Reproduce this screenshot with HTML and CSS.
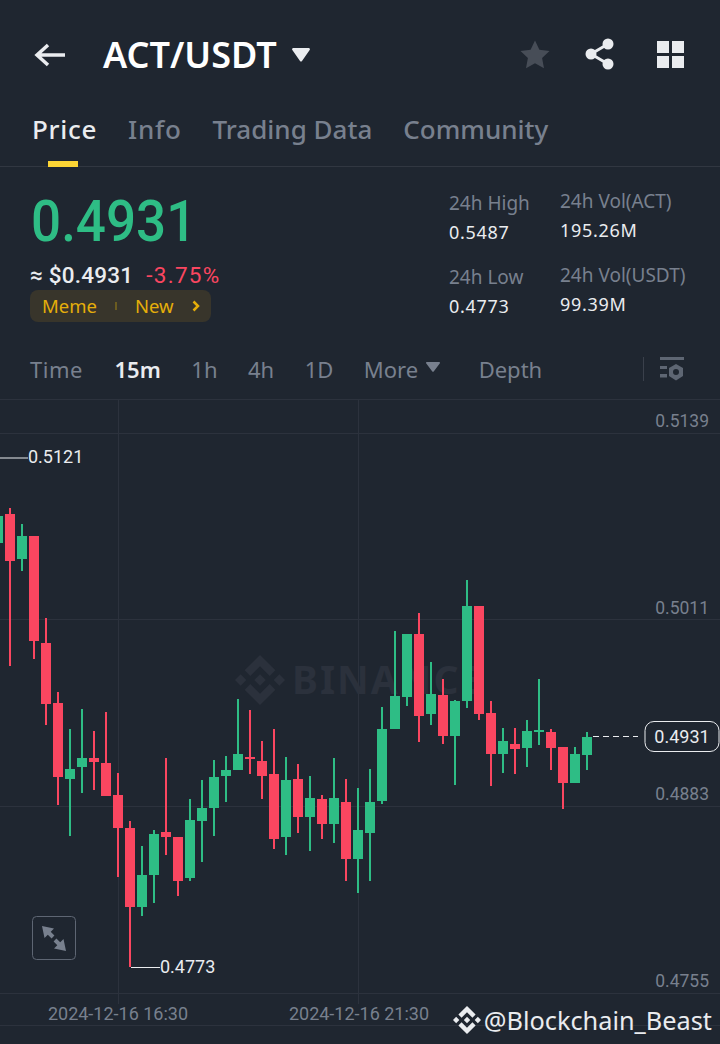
FILE: index.html
```html
<!DOCTYPE html>
<html>
<head>
    <title>ACT/USDT</title>
    <link rel="stylesheet" href="styles.css">
</head>
<body>
    <svg class="defs" width="0" height="0">
        <symbol id="logo" viewBox="0 0 126.61 126.61">
            <path d="M38.73 53.2l24.59-24.58 24.6 24.6 14.3-14.31L63.32 0 24.42 38.9zM0 63.31l14.3-14.31 14.31 14.31-14.31 14.3zM38.73 73.41l24.59 24.59 24.6-24.6 14.31 14.29-38.9 38.91-38.91-38.88v-.03zM98 63.31L112.3 49l14.31 14.3-14.31 14.32zM77.83 63.3L63.32 48.78 52.59 59.51l-1.24 1.23-2.54 2.54 14.51 14.5 14.51-14.47z"/>
        </symbol>
    </svg>

    <header class="topbar">
        <svg class="back-icon" width="32" height="24" viewBox="0 0 32 24">
            <path d="M31 12H3M14 2L3 12l11 10"/>
        </svg>
        <h1 class="pair">ACT/USDT</h1>
        <svg class="pair-caret" width="18" height="14" viewBox="0 0 18 14">
            <path d="M1.5 0h15c1.3 0 1.9 1.4 1 2.3l-7.5 10.7c-.6.7-1.4.7-2 0L.5 2.3C-.4 1.4.2 0 1.5 0z"/>
        </svg>
        <div class="topbar-actions">
            <svg class="star-icon" width="32" height="32" viewBox="0 0 32 32">
                <path d="M16 1.5l4.4 9.3 10.1 1.3-7.4 7 1.9 10.1-9-4.9-9 4.9 1.9-10.1-7.4-7 10.1-1.3z"/>
            </svg>
            <svg class="share-icon" width="30" height="32" viewBox="0 0 30 32">
                <path class="share-line" d="M7 16L24 6M7 16l17 10"/>
                <circle cx="7" cy="16" r="5.5"/>
                <circle cx="24" cy="6" r="5.5"/>
                <circle cx="24" cy="26" r="5.5"/>
            </svg>
            <svg class="grid-icon" width="27" height="27" viewBox="0 0 27 27">
                <rect width="12" height="12"/>
                <rect x="15" width="12" height="12"/>
                <rect y="15" width="12" height="12"/>
                <rect x="15" y="15" width="12" height="12"/>
            </svg>
        </div>
    </header>

    <nav class="tabs">
        <a class="tab tab-short tab-active">Price</a>
        <a class="tab tab-short">Info</a>
        <a class="tab">Trading Data</a>
        <a class="tab">Community</a>
    </nav>

    <section class="summary">
        <div class="price-block">
            <div class="last-price">0.4931</div>
            <div class="price-line">
                <span class="fiat">≈ $0.4931</span>
                <span class="change">-3.75%</span>
            </div>
            <div class="tags">
                <span>Meme</span>
                <i class="tag-sep"></i>
                <span>New</span>
                <svg class="tag-arrow" width="8" height="12" viewBox="0 0 8 12">
                    <path d="M1.5 1.5L6 6l-4.5 4.5"/>
                </svg>
            </div>
        </div>
        <div class="stats">
            <div class="stat-col">
                <div class="stat-label">24h High</div>
                <div class="stat-value">0.5487</div>
                <div class="stat-label stat-gap">24h Low</div>
                <div class="stat-value">0.4773</div>
            </div>
            <div class="stat-col stat-col-vol">
                <div class="stat-label">24h Vol(ACT)</div>
                <div class="stat-value">195.26M</div>
                <div class="stat-label stat-gap">24h Vol(USDT)</div>
                <div class="stat-value">99.39M</div>
            </div>
        </div>
    </section>

    <div class="intervals">
        <span class="interval-time">Time</span>
        <span class="interval-active">15m</span>
        <span>1h</span>
        <span>4h</span>
        <span>1D</span>
        <span class="interval-more">More
            <svg width="14" height="10" viewBox="0 0 14 10"><path d="M1 0h12c.9 0 1.3 1 .7 1.6L7.7 9.5c-.4.4-1 .4-1.4 0L.3 1.6C-.3 1 .1 0 1 0z"/></svg>
        </span>
        <span class="interval-depth">Depth</span>
        <i class="interval-sep"></i>
        <svg class="settings-icon" width="24" height="24" viewBox="0 0 24 24">
            <rect width="24" height="3"/>
            <rect y="9" width="7" height="3"/>
            <rect y="17" width="7" height="3.5"/>
            <path fill-rule="evenodd" d="M16 7l7 4v8l-7 4.5-7-4.5v-8zM16 12a3 3 0 1 0 0 6 3 3 0 0 0 0-6z"/>
        </svg>
    </div>

    <main class="chart">
        <svg id="chart" class="chart-svg" width="720" height="645" viewBox="0 399 720 645">
            <g class="grid-lines">
                <path d="M0 399.5H720M0 433.5H720M0 619.5H720M0 806.5H720M0 993.5H720M0 1025.5H720"/>
                <path d="M118.5 400V1004M358.5 400V1004"/>
            </g>
            <use href="#logo" class="watermark" x="235" y="655" width="50" height="50"/>
            <text class="watermark-text" x="292" y="694">BINANCE</text>
            <g id="candles"></g>
            <g class="axis-labels">
                <text x="709" y="427">0.5139</text>
                <text x="709" y="614">0.5011</text>
                <text x="709" y="800">0.4883</text>
                <text x="709" y="987">0.4755</text>
            </g>
            <text class="date-label" x="118" y="1020">2024-12-16 16:30</text>
            <text class="date-label" x="359" y="1020">2024-12-16 21:30</text>
            <path class="marker-line" d="M0 458H28M131 967.5H160"/>
            <text class="marker-label" x="28" y="463">0.5121</text>
            <text class="marker-label" x="160" y="973">0.4773</text>
            <path class="last-line" d="M593 736.5H638"/>
            <rect class="last-box" x="645" y="721.5" width="74" height="30" rx="9"/>
            <text class="last-label" x="682" y="743">0.4931</text>
            <rect class="expand-box" x="32.5" y="916.5" width="43" height="43" rx="4"/>
            <path class="expand-head" d="M42 926l12 2.5-9.5 9.5zM66 951l-12-2.5 9.5-9.5z"/>
            <path class="expand-shaft" d="M47 931l6 6M61 946l-6-6"/>
        </svg>
        <div class="credit">
            <svg width="28" height="28"><use href="#logo"/></svg>
            <span>@Blockchain_Beast</span>
        </div>
    </main>

    <script src="chart.js"></script>
</body>
</html>
```
FILE: styles.css
```css
* {
    box-sizing: border-box;
}

body {
    margin: 0;
    width: 720px;
    height: 1044px;
    overflow: hidden;
    background-color: #1f2630;
    color: #eaecef;
    font-family: "Noto Sans", sans-serif;
}

.defs {
    display: block;
    height: 0;
}

/* top bar */
.topbar {
    display: flex;
    align-items: center;
    height: 108px;
    padding: 2px 36px 0 34px;
}

.back-icon path {
    fill: none;
    stroke: #eaecef;
    stroke-width: 3.5;
}

.pair {
    margin: 0 15px 0 37px;
    font-size: 36px;
    font-weight: 600;
    line-height: 44px;
    color: #fff;
}

.pair-caret {
    fill: #eaecef;
}

.topbar-actions {
    display: flex;
    align-items: center;
    gap: 33px;
    margin-left: auto;
}

.star-icon {
    fill: #474d57;
}

.share-icon {
    margin-top: -2px;
    fill: #eaecef;
}

.share-line {
    fill: none;
    stroke: #eaecef;
    stroke-width: 3;
}

.grid-icon {
    margin-top: -1px;
    margin-left: 10px;
    fill: #eaecef;
}

/* tabs */
.tabs {
    display: flex;
    gap: 31px;
    height: 59px;
    padding-left: 32px;
    border-bottom: 1px solid #313741;
}

.tab {
    position: relative;
    font-size: 26px;
    line-height: 42px;
    font-weight: 500;
    color: #78808e;
}

.tab-short {
    letter-spacing: 0.7px;
}

.tab-active {
    color: #eaecef;
}

.tab-active::after {
    content: "";
    position: absolute;
    left: 16px;
    bottom: -1px;
    width: 30px;
    height: 6px;
    background-color: #fcd535;
}

/* price and 24h stats */
.summary {
    display: flex;
    justify-content: space-between;
    height: 167px;
    padding: 26px 0 0 30px;
}

.last-price {
    margin-left: 1px;
    font-family: Roboto, sans-serif;
    font-size: 57px;
    font-weight: 500;
    line-height: 58px;
    color: #2ebd85;
    transform: scaleX(0.93);
    transform-origin: left;
}

.price-line {
    display: flex;
    gap: 13px;
    margin-top: 11px;
    font-family: Roboto, sans-serif;
    font-size: 22.5px;
    line-height: 26px;
}

.fiat {
    font-weight: 500;
    letter-spacing: 0.2px;
}

.change {
    letter-spacing: 1.3px;
    color: #fa4660;
}

.tags {
    display: flex;
    align-items: center;
    width: 181px;
    height: 32px;
    margin-top: 2px;
    padding: 0 0 1px 12px;
    border-radius: 8px;
    background-color: #38352b;
    font-size: 18.5px;
    color: #e5ae0a;
}

.tag-sep {
    width: 2px;
    height: 8px;
    margin: 0 18px;
    background-color: #6b5c20;
}

.tag-arrow {
    margin-left: 18px;
    fill: none;
    stroke: #e5ae0a;
    stroke-width: 2.5;
}

.stats {
    display: flex;
    gap: 32px;
    width: 271px;
    margin-top: -3px;
}

.stat-col {
    width: 79px;
    white-space: nowrap;
}

.stat-col-vol {
    margin-top: -2px;
}

.stat-label {
    font-size: 19px;
    line-height: 26px;
    color: #78808e;
}

.stat-gap {
    margin-top: 19px;
}

.stat-value {
    font-size: 18px;
    letter-spacing: 0.7px;
    line-height: 26px;
    margin-top: 3px;
}

/* interval row */
.intervals {
    display: flex;
    align-items: center;
    gap: 30.5px;
    height: 65px;
    padding: 4px 36px 0 30px;
    font-size: 22px;
    color: #78808e;
}

.interval-time {
    width: 54px;
    letter-spacing: 0.5px;
}

.interval-active {
    font-weight: 600;
    color: #eaecef;
}

.interval-more {
    display: flex;
    align-items: center;
    gap: 8px;
}

.interval-more svg {
    fill: #78808e;
    margin-top: -4px;
}

.interval-depth {
    margin-left: 8px;
}

.interval-sep {
    width: 1px;
    height: 24px;
    margin: 0 -14px 0 auto;
    background-color: #3a404b;
}

.settings-icon {
    fill: #5e6673;
}

/* chart */
.chart {
    position: relative;
    height: 645px;
}

.chart-svg {
    display: block;
    font-family: Roboto, sans-serif;
}

.grid-lines path {
    fill: none;
    stroke: #2c323d;
    stroke-width: 1;
}

.watermark {
    fill: #2b313c;
}

.watermark-text {
    font-family: "Noto Sans", sans-serif;
    font-size: 39px;
    font-weight: 700;
    letter-spacing: 2px;
    fill: #2b313c;
}

.candle-up {
    fill: #2ebd85;
}

.candle-down {
    fill: #fa4660;
}

.axis-labels text {
    font-size: 17.5px;
    text-anchor: end;
    fill: #78808e;
}

.date-label {
    font-size: 18px;
    text-anchor: middle;
    fill: #78808e;
}

.marker-line {
    fill: none;
    stroke: #eaecef;
    stroke-width: 1;
}

.marker-label {
    font-size: 18px;
    fill: #eaecef;
}

.last-line {
    fill: none;
    stroke: #eaecef;
    stroke-width: 1;
    stroke-dasharray: 6 4;
}

.last-box {
    fill: #1f2630;
    stroke: #eaecef;
    stroke-width: 1;
}

.last-label {
    font-size: 18px;
    text-anchor: middle;
    fill: #eaecef;
}

.expand-box {
    fill: none;
    stroke: #5e6673;
    stroke-width: 1;
}

.expand-head {
    fill: #78808e;
}

.expand-shaft {
    fill: none;
    stroke: #78808e;
    stroke-width: 4;
}

/* credit stamped over the chart */
.credit {
    position: absolute;
    right: 8px;
    bottom: 9px;
    display: flex;
    align-items: center;
    gap: 3px;
    font-size: 25.3px;
    line-height: 30px;
    color: #eaecef;
}

.credit svg {
    fill: #eaecef;
}
```
FILE: chart.js
```js
// x, wick top, body top, body bottom, wick bottom (page pixels)
const up = [
    [-2, 510, 516, 543, 598], [22, 524, 536, 559, 571], [70, 729, 769, 779, 836],
    [82, 709, 758, 767, 793], [142, 846, 875, 907, 916], [154, 830, 834, 875, 903],
    [190, 799, 820, 878, 881], [202, 780, 808, 821, 862], [214, 760, 777, 808, 836],
    [226, 756, 770, 776, 802], [238, 699, 754, 770, 770], [286, 757, 780, 837, 855],
    [310, 776, 798, 817, 851], [334, 758, 798, 824, 843], [358, 788, 830, 859, 893],
    [370, 769, 802, 833, 881], [382, 707, 729, 801, 804], [395, 631, 696, 729, 729],
    [407, 634, 634, 697, 706], [431, 662, 694, 714, 725], [455, 700, 701, 736, 785],
    [467, 580, 606, 701, 708], [503, 728, 741, 754, 773], [527, 720, 731, 748, 767],
    [539, 679, 730, 732, 745], [575, 747, 754, 783, 783], [587, 732, 737, 755, 770]
];
const down = [
    [10, 508, 514, 561, 666], [34, 536, 536, 641, 659], [46, 618, 643, 704, 725],
    [58, 692, 703, 777, 805], [94, 731, 758, 762, 790], [106, 712, 763, 796, 796],
    [118, 773, 795, 828, 877], [130, 821, 828, 907, 967], [166, 758, 832, 837, 855],
    [178, 837, 837, 881, 896], [250, 710, 757, 759, 774], [262, 741, 761, 776, 799],
    [274, 729, 774, 839, 849], [298, 764, 779, 817, 833], [322, 795, 799, 824, 839],
    [346, 779, 802, 859, 881], [419, 613, 634, 716, 742], [443, 679, 695, 736, 744],
    [479, 606, 606, 714, 720], [491, 701, 713, 754, 786], [515, 728, 744, 749, 774],
    [551, 729, 732, 748, 770], [563, 747, 747, 783, 809]
];

function drawCandles(list, className) {
    const group = document.getElementById('candles');
    list.forEach(function (c) {
        const wick = document.createElementNS('http://www.w3.org/2000/svg', 'rect');
        wick.setAttribute('x', c[0] - 1);
        wick.setAttribute('y', c[1]);
        wick.setAttribute('width', 2);
        wick.setAttribute('height', c[4] - c[1]);
        wick.setAttribute('class', className);
        group.appendChild(wick);

        const body = document.createElementNS('http://www.w3.org/2000/svg', 'rect');
        body.setAttribute('x', c[0] - 5);
        body.setAttribute('y', c[2]);
        body.setAttribute('width', 10);
        body.setAttribute('height', c[3] - c[2]);
        body.setAttribute('class', className);
        group.appendChild(body);
    });
}

drawCandles(up, 'candle-up');
drawCandles(down, 'candle-down');
```
